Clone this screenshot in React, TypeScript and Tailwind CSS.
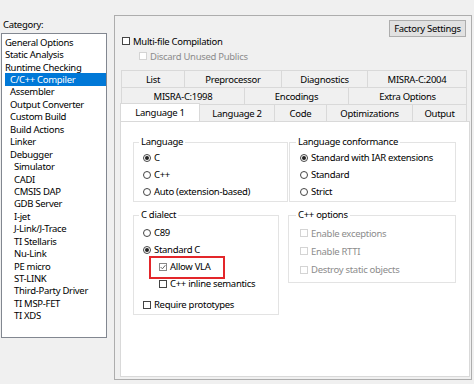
import React from 'react';

const categories = [
  { name: 'General Options', level: 0 },
  { name: 'Static Analysis', level: 0 },
  { name: 'Runtime Checking', level: 0 },
  { name: 'C/C++ Compiler', level: 1, selected: true },
  { name: 'Assembler', level: 1 },
  { name: 'Output Converter', level: 1 },
  { name: 'Custom Build', level: 1 },
  { name: 'Build Actions', level: 1 },
  { name: 'Linker', level: 1 },
  { name: 'Debugger', level: 1 },
  { name: 'Simulator', level: 2 },
  { name: 'CADI', level: 2 },
  { name: 'CMSIS DAP', level: 2 },
  { name: 'GDB Server', level: 2 },
  { name: 'I-jet', level: 2 },
  { name: 'J-Link/J-Trace', level: 2 },
  { name: 'TI Stellaris', level: 2 },
  { name: 'Nu-Link', level: 2 },
  { name: 'PE micro', level: 2 },
  { name: 'ST-LINK', level: 2 },
  { name: 'Third-Party Driver', level: 2 },
  { name: 'TI MSP-FET', level: 2 },
  { name: 'TI XDS', level: 2 },
];

const tabRow1 = [
  { label: 'List', w: 'w-[64px]' },
  { label: 'Preprocessor', w: 'w-[97px]' },
  { label: 'Diagnostics', w: 'w-[86px]' },
  { label: 'MISRA-C:2004', w: 'w-[99px]' },
];

const tabRow2 = [
  { label: 'MISRA-C:1998', w: 'w-[124px]' },
  { label: 'Encodings', w: 'w-[104px]' },
  { label: 'Extra Options', w: 'w-[118px]' },
];

const tabRow3 = [
  { label: 'Language 2', w: 'w-[75px]' },
  { label: 'Code', w: 'w-[52px]' },
  { label: 'Optimizations', w: 'w-[86px]' },
  { label: 'Output', w: 'w-[54px]' },
];

const Radio = ({ checked }: { checked?: boolean }) => (
  <span className="w-[8px] h-[8px] rounded-full border border-[#444] bg-white flex items-center justify-center shrink-0">
    {checked && <span className="w-[4px] h-[4px] rounded-full bg-[#222]" />}
  </span>
);

const Check = ({ checked, disabled }: { checked?: boolean; disabled?: boolean }) => (
  <span
    className={`w-[8px] h-[8px] border bg-white flex items-center justify-center shrink-0 ${
      disabled ? 'border-[#d4d4d4]' : checked ? 'border-[#888]' : 'border-[#444]'
    }`}
  >
    {checked && (
      <svg width="6" height="6" viewBox="0 0 6 6">
        <path d="M0.6 3 L2.4 4.8 L5.4 1.2" fill="none" stroke="#666" strokeWidth="1" />
      </svg>
    )}
  </span>
);

const App = () => {
  return (
    <div className="w-[474px] h-[384px] bg-[#f0f0f0] flex overflow-hidden text-[9.5px] tracking-[-0.3px] text-black font-['Noto_Sans',sans-serif] leading-[11px] whitespace-nowrap">
      {/* category list */}
      <div className="w-[114px] shrink-0 pt-[16px] pl-[1px]">
        <div className="h-[17px] pl-[2px] flex items-center">Category:</div>
        <div className="w-[106px] h-[305px] border border-[#828790] bg-white pt-[2px] pl-[3px]">
          {categories.map((c) => (
            <div
              key={c.name}
              className={`h-[12.45px] flex items-center ${c.selected ? 'bg-[#0078d7] text-white' : ''} ${
                c.level === 0 ? 'pl-0' : c.level === 1 ? 'pl-[5px]' : 'pl-[9px]'
              }`}
            >
              {c.name}
            </div>
          ))}
        </div>
      </div>

      {/* options panel */}
      <div className="mt-[15px] w-[358px] h-[365px] shrink-0 border border-[#adadad] flex flex-col">
        <div className="flex justify-end pr-[5px]">
          <div className="mt-[4px] w-[77px] h-[17px] bg-[#e1e1e1] border border-[#adadad] flex items-center justify-center">
            Factory Settings
          </div>
        </div>
        <div className="-mt-[2px] h-[12px] pl-[7px] flex items-center gap-[3px]">
          <Check />
          <span>Multi-file Compilation</span>
        </div>
        <div className="mt-[3px] h-[12px] pl-[24px] flex items-center gap-[3px] text-[#8c8c8c]">
          <Check disabled />
          <span>Discard Unused Publics</span>
        </div>

        {/* tabs */}
        <div className="mt-[8px] ml-[6px] w-[346px] flex flex-col">
          <div className="flex h-[17px]">
            {tabRow1.map((t, i) => (
              <div
                key={t.label}
                className={`${t.w} border-t border-r border-[#d9d9d9] flex items-center justify-center ${
                  i === 0 ? 'border-l' : ''
                }`}
              >
                {t.label}
              </div>
            ))}
          </div>
          <div className="flex h-[17px]">
            {tabRow2.map((t, i) => (
              <div
                key={t.label}
                className={`${t.w} border-t border-r border-[#d9d9d9] flex items-center justify-center ${
                  i === 0 ? 'border-l' : ''
                }`}
              >
                {t.label}
              </div>
            ))}
          </div>
          <div className="flex h-[17px] relative z-10">
            <div className="-ml-[1px] w-[80px] h-[18px] -mt-[1px] bg-white border-t border-l border-r border-[#d9d9d9] flex items-center justify-center">
              Language 1
            </div>
            {tabRow3.map((t) => (
              <div key={t.label} className={`${t.w} border-t border-r border-[#d9d9d9] flex items-center justify-center`}>
                {t.label}
              </div>
            ))}
          </div>
        </div>

        {/* page */}
        <div className="ml-[5px] w-[350px] h-[256px] bg-white border border-[#d9d9d9] flex pl-[12px]">
          <div className="w-[156px] shrink-0 flex flex-col">
            <fieldset className="mt-[13px] w-[155px] border border-[#e3e3e3] pl-[9px] pb-[1px]">
              <legend className="ml-[-4px] px-[2px] h-[14px] leading-[14px]">Language</legend>
              <div className="h-[17px] flex items-center gap-[3px]">
                <Radio checked />
                <span>C</span>
              </div>
              <div className="h-[17px] flex items-center gap-[3px]">
                <Radio />
                <span>C++</span>
              </div>
              <div className="h-[17px] flex items-center gap-[3px]">
                <Radio />
                <span>Auto (extension-based)</span>
              </div>
            </fieldset>
            <fieldset className="mt-[6px] w-[146px] border border-[#e3e3e3] pl-[9px] pt-[2px] pb-[1px]">
              <legend className="ml-[-4px] px-[2px] h-[14px] leading-[14px]">C dialect</legend>
              <div className="h-[17px] flex items-center gap-[3px]">
                <Radio />
                <span>C89</span>
              </div>
              <div className="h-[17px] flex items-center gap-[3px]">
                <Radio checked />
                <span>Standard C</span>
              </div>
              <div className="h-[17px] pl-[16px] flex items-center gap-[3px] relative">
                <Check checked />
                <span>Allow VLA</span>
                <span className="absolute left-[6px] -top-[2px] w-[76px] h-[23px] border-[2.5px] border-[#e3262a]" />
              </div>
              <div className="h-[17px] pl-[16px] flex items-center gap-[3px]">
                <Check />
                <span>C++ inline semantics</span>
              </div>
              <div className="mt-[4px] h-[17px] flex items-center gap-[3px]">
                <Check />
                <span>Require prototypes</span>
              </div>
            </fieldset>
          </div>

          <div className="w-[167px] shrink-0 flex flex-col">
            <fieldset className="mt-[13px] border border-[#e3e3e3] pl-[10px] pb-[1px]">
              <legend className="ml-[-4px] px-[2px] h-[14px] leading-[14px]">Language conformance</legend>
              <div className="h-[17px] flex items-center gap-[3px]">
                <Radio checked />
                <span>Standard with IAR extensions</span>
              </div>
              <div className="h-[17px] flex items-center gap-[3px]">
                <Radio />
                <span>Standard</span>
              </div>
              <div className="h-[17px] flex items-center gap-[3px]">
                <Radio />
                <span>Strict</span>
              </div>
            </fieldset>
            <fieldset className="mt-[6px] -ml-[1px] border border-[#e3e3e3] pl-[11px] pt-[2px] pb-[3px] text-[#8c8c8c]">
              <legend className="ml-[-4px] px-[2px] h-[14px] leading-[14px] text-black">C++ options</legend>
              <div className="h-[18px] flex items-center gap-[3px]">
                <Check disabled />
                <span>Enable exceptions</span>
              </div>
              <div className="h-[18px] flex items-center gap-[3px]">
                <Check disabled />
                <span>Enable RTTI</span>
              </div>
              <div className="h-[19px] flex items-center gap-[3px]">
                <Check disabled />
                <span>Destroy static objects</span>
              </div>
            </fieldset>
          </div>
        </div>
      </div>
    </div>
  );
};

export default App;
